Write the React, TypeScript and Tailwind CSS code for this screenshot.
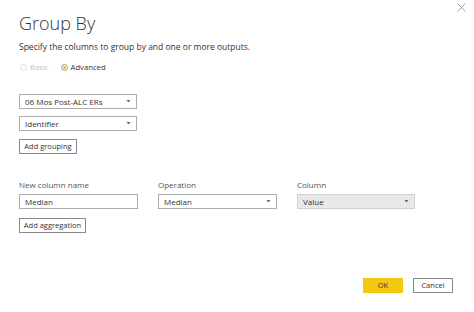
import React from 'react';

function Caret() {
  return (
    <svg width="5" height="3" viewBox="0 0 5 3" className="shrink-0">
      <path d="M0.5 0 L4.5 0 L2.5 2.5 Z" fill="#666" />
    </svg>
  );
}

function Select({ value, width, disabled }: { value: string; width: string; disabled?: boolean }) {
  return (
    <div
      className={`${width} h-[15px] flex items-center justify-between pl-[5px] pr-[5px] border ${
        disabled ? 'bg-[#e8e8e8] border-[#d0d0d0]' : 'bg-white border-[#adadad]'
      } text-[8px] text-[#333] whitespace-nowrap`}
    >
      <span className="leading-none">{value}</span>
      <Caret />
    </div>
  );
}

function Button({ label, width }: { label: string; width: string }) {
  return (
    <div
      className={`${width} h-[15px] flex items-center justify-center border border-[#8a8a8a] bg-white text-[7.5px] text-[#333] whitespace-nowrap`}
    >
      {label}
    </div>
  );
}

export default function App() {
  return (
    <div
      className="relative w-[474px] h-[312px] bg-white overflow-hidden"
      style={{ fontFamily: '"Open Sans", "Noto Sans", sans-serif' }}
    >
      {/* Close */}
      <svg width="9" height="9" viewBox="0 0 9 9" className="absolute left-[457px] top-[3px]">
        <path d="M0.5 0.5 L8.5 8.5 M8.5 0.5 L0.5 8.5" stroke="#9a9a9a" strokeWidth="0.9" />
      </svg>

      <div className="pl-[19px]">
        <div className="pt-[10px] text-[18px] leading-[26px] font-light text-[#333]">Group By</div>
        <div className="mt-[5px] text-[8.5px] leading-[12px] text-[#333] whitespace-nowrap">
          Specify the columns to group by and one or more outputs.
        </div>

        {/* Radios */}
        <div className="mt-[9px] flex items-center h-[12px] pl-[1px] text-[7.7px]">
          <div className="flex items-center gap-[3px] text-[#c0c0c0]">
            <span className="w-[7px] h-[7px] rounded-full border border-[#dcdcdc]" />
            <span>Basic</span>
          </div>
          <div className="ml-[12px] flex items-center gap-[3px] text-[#333]">
            <span className="w-[7px] h-[7px] rounded-full border border-[#999] flex items-center justify-center">
              <span className="w-[3px] h-[3px] rounded-full bg-[#e6b800]" />
            </span>
            <span>Advanced</span>
          </div>
        </div>

        {/* Grouping */}
        <div className="mt-[20px] flex flex-col gap-[7px]">
          <Select value="06 Mos Post-ALC ERs" width="w-[118px]" />
          <Select value="Identifier" width="w-[118px]" />
        </div>
        <div className="mt-[8px]">
          <Button label="Add grouping" width="w-[58px]" />
        </div>

        {/* Aggregation */}
        <div className="mt-[25px] flex gap-[20px]">
          <div className="flex flex-col">
            <div className="h-[12px] text-[8px] leading-[12px] text-[#555] whitespace-nowrap">New column name</div>
            <div className="mt-[3px] w-[119px] h-[15px] flex items-center pl-[5px] border border-[#adadad] text-[8px] text-[#333]">
              Median
            </div>
          </div>
          <div className="flex flex-col">
            <div className="h-[12px] text-[8px] leading-[12px] text-[#555]">Operation</div>
            <div className="mt-[3px]">
              <Select value="Median" width="w-[119px]" />
            </div>
          </div>
          <div className="flex flex-col">
            <div className="h-[12px] text-[8px] leading-[12px] text-[#555]">Column</div>
            <div className="mt-[3px]">
              <Select value="Value" width="w-[118px]" disabled />
            </div>
          </div>
        </div>
        <div className="mt-[9px]">
          <Button label="Add aggregation" width="w-[67px]" />
        </div>
      </div>

      {/* Footer */}
      <div className="mt-[45px] pr-[21px] flex justify-end gap-[10px]">
        <div className="w-[40px] h-[15px] flex items-center justify-center bg-[#f2c811] text-[7.5px] text-[#333]">
          OK
        </div>
        <div className="w-[40px] h-[15px] flex items-center justify-center border border-[#8a8a8a] bg-white text-[7.5px] text-[#333]">
          Cancel
        </div>
      </div>
    </div>
  );
}
